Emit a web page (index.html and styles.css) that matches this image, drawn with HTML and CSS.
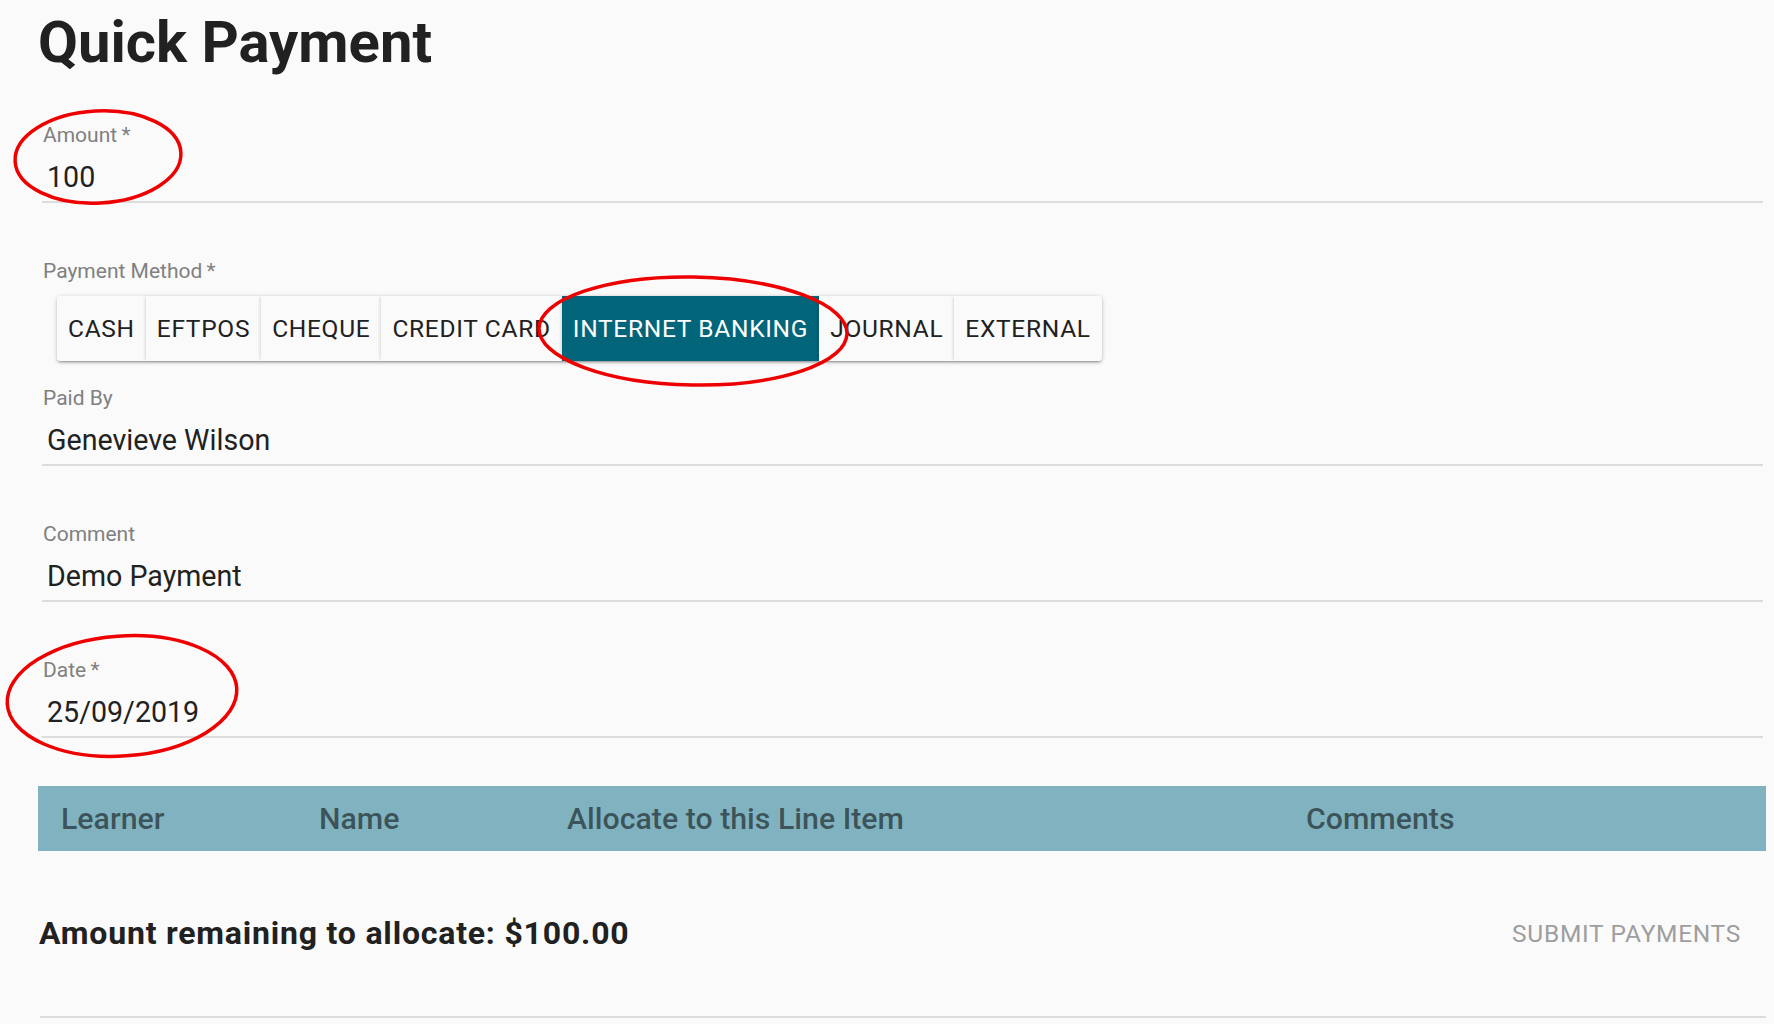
FILE: index.html
```html
<!DOCTYPE html>
<html lang="en">
<head>
<meta charset="utf-8">
<title>Quick Payment</title>
<link rel="stylesheet" href="styles.css">
</head>
<body>
<div class="page">
  <h1 class="title">Quick Payment</h1>

  <div class="field field-first">
    <div class="field-label">Amount&thinsp;*</div>
    <div class="field-value">100</div>
  </div>

  <div class="method">
    <div class="field-label">Payment Method&thinsp;*</div>
    <div class="toggle-group">
      <button class="toggle">Cash</button>
      <button class="toggle">Eftpos</button>
      <button class="toggle">Cheque</button>
      <button class="toggle">Credit Card</button>
      <button class="toggle toggle-selected">Internet Banking</button>
      <button class="toggle">Journal</button>
      <button class="toggle">External</button>
    </div>
  </div>

  <div class="field field-after-method">
    <div class="field-label">Paid By</div>
    <div class="field-value">Genevieve Wilson</div>
  </div>

  <div class="field">
    <div class="field-label">Comment</div>
    <div class="field-value">Demo Payment</div>
  </div>

  <div class="field">
    <div class="field-label">Date&thinsp;*</div>
    <div class="field-value">25/09/2019</div>
  </div>

  <div class="table-head">
    <div class="th">Learner</div>
    <div class="th">Name</div>
    <div class="th">Allocate to this Line Item</div>
    <div class="th">Comments</div>
  </div>

  <div class="summary">
    <h2 class="remaining">Amount remaining to allocate: $100.00</h2>
    <button class="submit" disabled>Submit Payments</button>
  </div>
  <div class="bottom-rule"></div>

  <svg class="annotations" width="1774" height="1024" viewBox="0 0 1774 1024" aria-hidden="true">
    <ellipse cx="98" cy="157" rx="83" ry="46" transform="rotate(-3 98 157)"></ellipse>
    <ellipse cx="693" cy="331" rx="154" ry="54" transform="rotate(1 693 331)"></ellipse>
    <ellipse cx="122" cy="696" rx="115" ry="60" transform="rotate(-4 122 696)"></ellipse>
  </svg>
</div>
</body>
</html>
```

FILE: styles.css
```css
* {
  box-sizing: border-box;
}

html, body {
  margin: 0;
  padding: 0;
  background: #fafafa;
}

body {
  font-family: Roboto, "Liberation Sans", sans-serif;
  color: #212121;
}

.page {
  position: relative;
  width: 1774px;
  height: 1024px;
  padding: 0 8px 0 38px;
  overflow: hidden;
}

.title {
  margin: 0;
  padding-top: 6px;
  font-size: 58px;
  line-height: 72px;
  font-weight: 700;
  color: #212121;
}

.field {
  margin: 56px 3px 0 4px;
  padding-bottom: 7px;
  border-bottom: 2px solid #dcdcdc;
}

.field-first {
  margin-top: 45px;
}

.field-after-method {
  margin-top: 25px;
}

.field-label {
  padding-left: 1px;
  font-size: 21px;
  line-height: 24px;
  color: #808080;
}

.field-value {
  margin-top: 13px;
  padding-left: 5px;
  font-size: 28.6px;
  line-height: 34px;
  color: #212121;
}

.method {
  margin: 56px 3px 0 4px;
}

.toggle-group {
  display: inline-flex;
  margin: 13px 0 0 15px;
  height: 65px;
  border-radius: 4px;
  background: #fafafa;
  box-shadow: 0 1px 5px rgba(0, 0, 0, 0.2), 0 2px 2px rgba(0, 0, 0, 0.14), 0 3px 1px -2px rgba(0, 0, 0, 0.12);
}

.toggle {
  position: relative;
  height: 65px;
  padding: 0 11px;
  border: 0;
  margin: 0;
  background: #fafafa;
  font-family: Roboto, "Liberation Sans", sans-serif;
  font-size: 24.5px;
  letter-spacing: 0.7px;
  text-transform: uppercase;
  color: #212121;
  cursor: pointer;
}

.toggle + .toggle {
  box-shadow: -2px 0 3px -1px rgba(0, 0, 0, 0.14);
}

.toggle:first-child {
  border-radius: 4px 0 0 4px;
}

.toggle:last-child {
  border-radius: 0 4px 4px 0;
}

.toggle-selected {
  background: #02657a;
  color: #ffffff;
}

.table-head {
  display: grid;
  grid-template-columns: 258px 248px 739px 1fr;
  align-items: center;
  height: 65px;
  margin-top: 48px;
  padding-left: 23px;
  background: #80b3bf;
}

.th {
  font-size: 30.3px;
  font-weight: 500;
  color: rgba(0, 0, 0, 0.54);
}

.summary {
  display: flex;
  align-items: center;
  justify-content: space-between;
  height: 64px;
  margin-top: 50px;
}

.remaining {
  margin: 0 0 0 1px;
  font-size: 32px;
  letter-spacing: 0.8px;
  font-weight: 700;
  color: #212121;
}

.submit {
  padding: 0 25px;
  border: 0;
  background: transparent;
  font-family: Roboto, "Liberation Sans", sans-serif;
  font-size: 24.5px;
  letter-spacing: 0.7px;
  text-transform: uppercase;
  color: #9e9e9e;
}

.bottom-rule {
  margin: 51px 0 0 2px;
  border-top: 2px solid #dcdcdc;
}

.annotations {
  position: absolute;
  left: 0;
  top: 0;
  pointer-events: none;
}

.annotations ellipse {
  fill: none;
  stroke: #ee0000;
  stroke-width: 3.5;
}
```
